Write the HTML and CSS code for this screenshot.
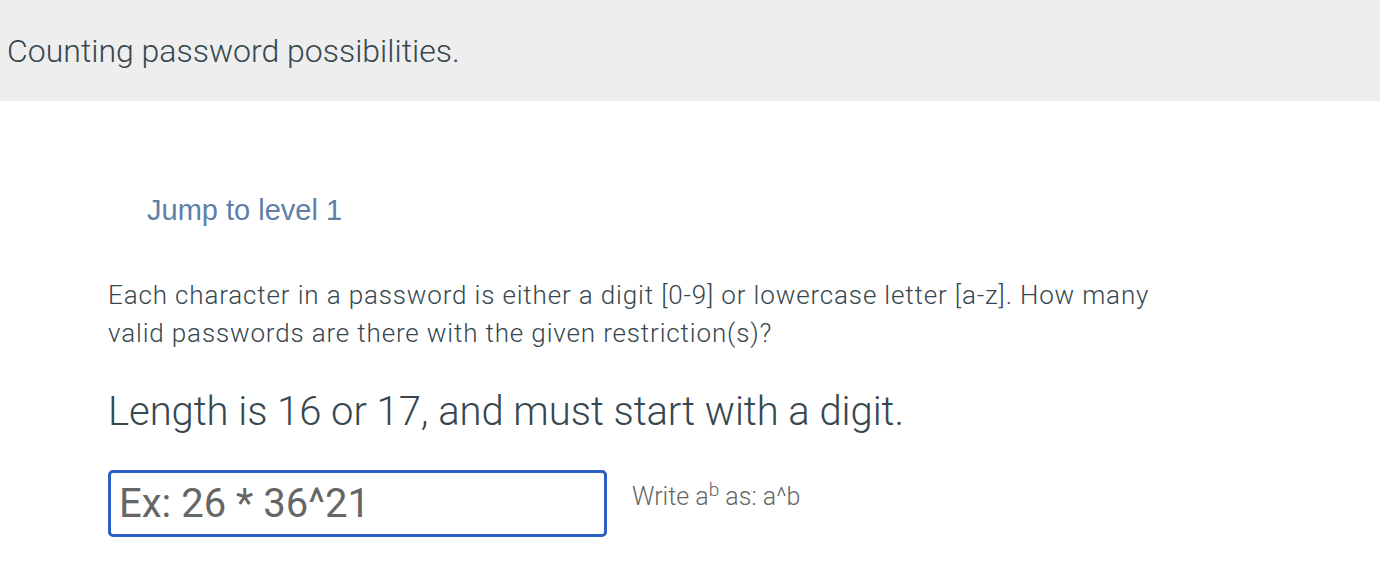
FILE: index.html
```html
<!DOCTYPE html>
<html lang="en">
<head>
  <meta charset="UTF-8">
  <title>Counting password possibilities</title>
  <link rel="stylesheet" href="styles.css">
</head>
<body>
  <!-- Title bar -->
  <div class="title-bar">Counting password possibilities.</div>

  <!-- Activity -->
  <div class="activity">
    <a class="jump-link" href="#">Jump to level 1</a>

    <p class="prompt">Each character in a password is either a digit [0-9] or lowercase letter [a-z]. How many valid passwords are there with the given restriction(s)?</p>

    <h2 class="restriction">Length is 16 or 17, and must start with a digit.</h2>

    <div class="answer-row">
      <div class="answer-box">
        <input type="text" class="answer-input" placeholder="Ex: 26 * 36^21">
      </div>
      <div class="hint">Write a<sup>b</sup> as: a^b</div>
    </div>
  </div>
</body>
</html>
```

FILE: styles.css
```css
/* General Styling */
body {
  margin: 0;
  font-family: Roboto, "Liberation Sans", sans-serif;
  font-weight: 300;
  color: #37474f;
  background: #fff;
}

.title-bar {
  height: 101px;
  padding-left: 7px;
  display: flex;
  align-items: center;
  background: #eeeeee;
  font-size: 32px;
}

.activity {
  padding: 93px 0 0 108px;
}

.jump-link {
  display: block;
  margin-left: 39px;
  font-family: "Liberation Sans", Arial, sans-serif;
  font-weight: 400;
  font-size: 29px;
  color: #5e7fa8;
  text-decoration: none;
}

.prompt {
  margin: 49px 0 0;
  max-width: 1080px;
  font-size: 26px;
  line-height: 38px;
  letter-spacing: 0.85px;
}

.restriction {
  margin: 36px 0 0;
  font-weight: 300;
  font-size: 40px;
  letter-spacing: -0.05px;
}

.answer-row {
  display: flex;
  align-items: flex-start;
  margin-top: 35px;
}

.answer-box {
  width: 493px;
  height: 61px;
  border: 3px solid #2a5fc4;
  border-radius: 5px;
  overflow: hidden;
}

.answer-input {
  width: 100%;
  height: 100%;
  box-sizing: border-box;
  padding: 0 8px;
  border: none;
  outline: none;
  font-family: Roboto, sans-serif;
  font-size: 40px;
  color: #666;
  background: transparent;
}

.answer-input::placeholder {
  color: #666;
}

.hint {
  margin: 12px 0 0 25px;
  font-size: 25px;
  color: #666;
}

.hint sup {
  font-size: 19px;
  line-height: 0;
}
```
